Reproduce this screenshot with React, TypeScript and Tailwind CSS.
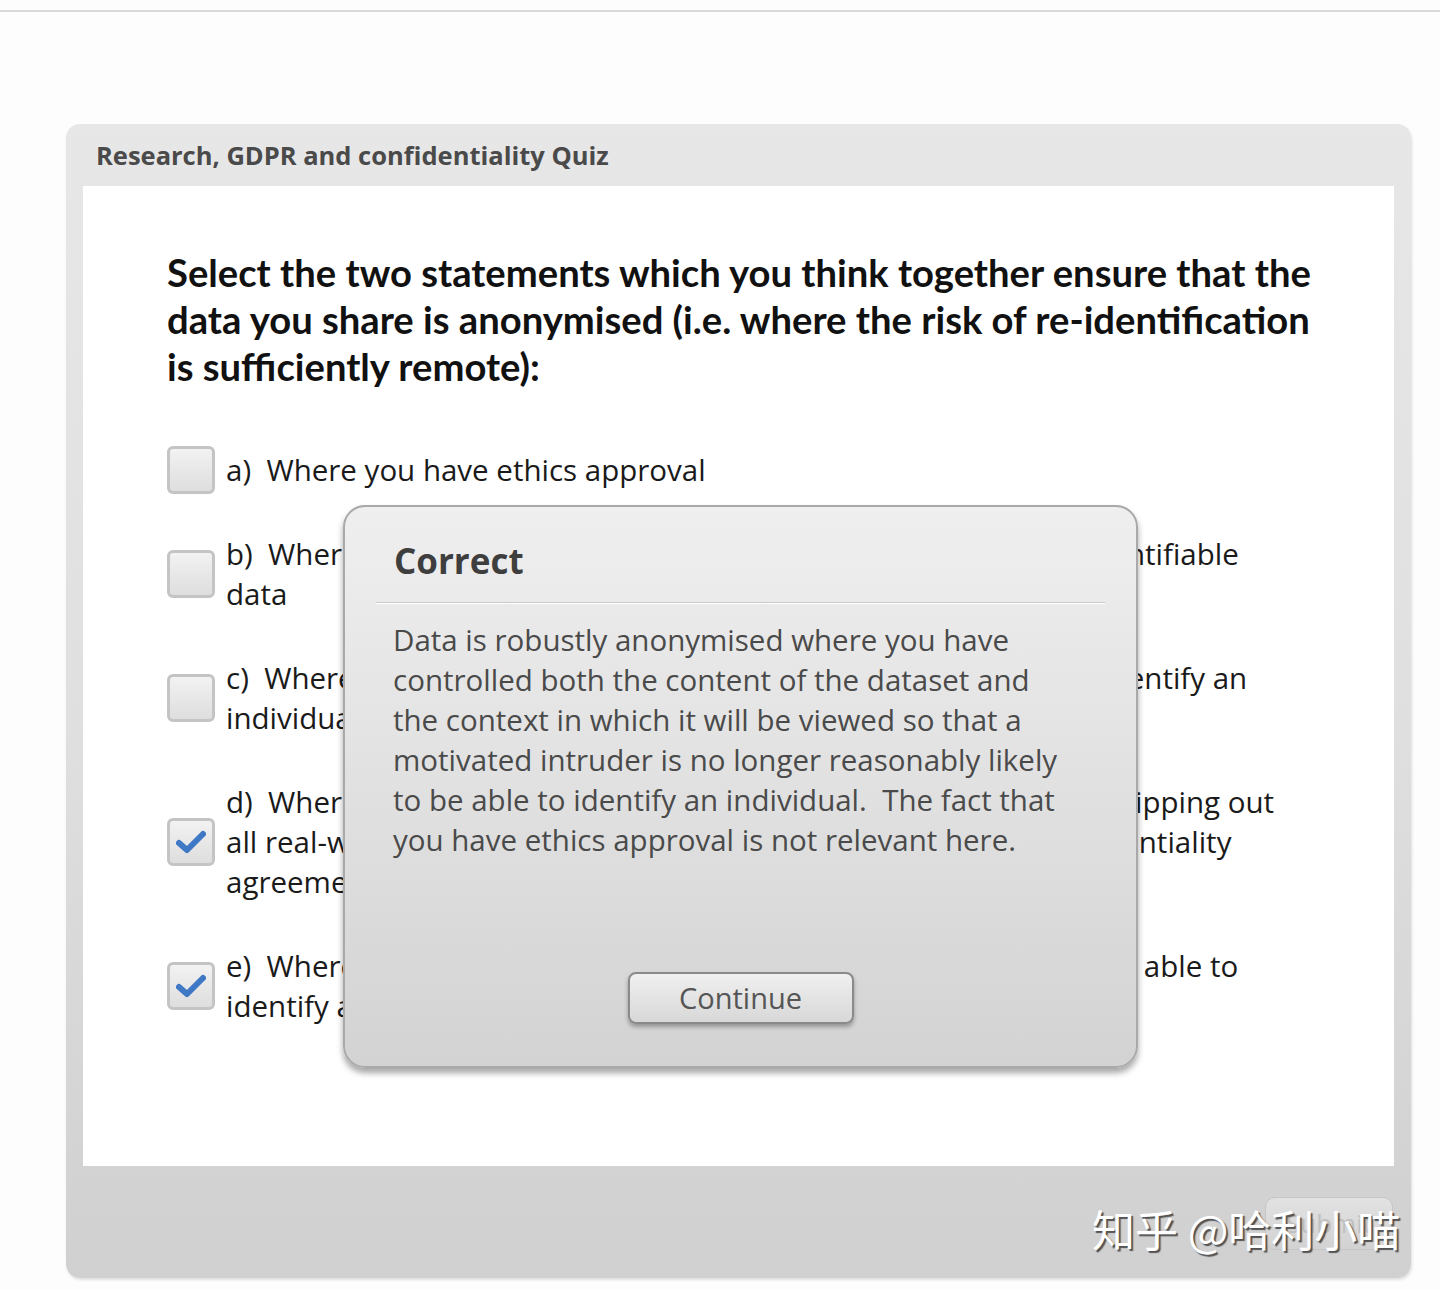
import React from "react";

const NB = "\u00a0";

function Check() {
  return (
    <svg width="30" height="24" viewBox="0 0 30 24">
      <path d="M3 13 L11 20 L27 4" fill="none" stroke="#3f78c4" strokeWidth="6" strokeLinecap="round" strokeLinejoin="round" />
    </svg>
  );
}

function Box({ checked }: { checked?: boolean }) {
  return (
    <div className="w-[48px] h-[48px] shrink-0 rounded-[6px] border-[3px] border-[#c4c4c4] bg-gradient-to-b from-[#f2f2f2] to-[#dedede] flex items-center justify-center">
      {checked ? <Check /> : null}
    </div>
  );
}

function Row({ lines, checked, cls }: { lines: string[]; checked?: boolean; cls: string }) {
  return (
    <div className={"flex items-center gap-[11px] " + cls}>
      <Box checked={checked} />
      <div className="text-[29.5px] leading-[40px] text-[#1a1a1a] whitespace-nowrap">
        {lines.map((l, i) => (
          <div key={i}>{l}</div>
        ))}
      </div>
    </div>
  );
}

export default function App() {
  return (
    <div className="relative w-[1440px] h-[1290px] bg-[#fdfdfd] overflow-hidden" style={{ fontFamily: '"Open Sans", "Noto Sans", sans-serif' }}>
      <div className="h-[10px]" />
      <div className="h-[2px] bg-[#d9d9d9]" />
      <div className="pt-[112px] pl-[66px]">
        <div className="w-[1345px] h-[1154px] rounded-[14px] bg-gradient-to-b from-[#e7e7e7] via-[#e0e0e0] to-[#d0d0d0] shadow-[1px_2px_3px_rgba(0,0,0,0.12)] flex flex-col px-[17px]">
          <div className="h-[62px] flex items-center pl-[13px]">
            <span className="text-[25.5px] font-bold text-[#4a4a4a]">Research, GDPR and confidentiality Quiz</span>
          </div>
          <div className="relative h-[980px] bg-white pt-[63px] pl-[84px]">
            <div className="text-[38.2px] leading-[47px] font-bold text-[#111111] w-[1165px]" style={{ fontFamily: 'Lato, "Open Sans", sans-serif' }}>
              Select the two statements which you think together ensure that the data you share is anonymised (i.e. where the risk of re-identification is sufficiently remote):
            </div>
            <div className="flex flex-col">
              <Row cls="mt-[56px]" lines={["a)" + NB + NB + "Where you have ethics approval"]} />
              <Row cls="mt-[40px]" lines={["b)" + NB + NB + "Where you have taken away names, addresses and directly identifiable", "data"]} />
              <Row cls="mt-[44px]" lines={["c)" + NB + NB + "Where you have removed information which may be used to identify an", "individual"]} />
              <Row cls="mt-[44px]" checked lines={["d)" + NB + NB + "Where you have controlled the environment of your data by stripping out", "all real-world links to the data and ensured users sign data confidentiality", "agreements"]} />
              <Row cls="mt-[44px]" checked lines={["e)" + NB + NB + "Where you know a motivated intruder would not reasonably be able to", "identify an individual"]} />
            </div>

            <div className="absolute left-[260px] top-[319px] w-[795px] h-[563px] rounded-[22px] border-[2px] border-[#a9a9a9] bg-gradient-to-b from-[#efefef] to-[#d3d3d3] shadow-[0_5px_6px_rgba(0,0,0,0.35)] flex flex-col">
              <div className="pt-[30px] pl-[49px] h-[95px]">
                <span className="text-[35px] leading-[48px] font-bold text-[#3e3e3e]">Correct</span>
              </div>
              <div className="mx-[31px] h-[2px] bg-[#c9c9c9] border-b border-white" />
              <div className="pt-[16px] pl-[48px] text-[29.5px] leading-[40px] text-[#4a4a4a] whitespace-nowrap">
                <div>Data is robustly anonymised where you have</div>
                <div>controlled both the content of the dataset and</div>
                <div>the context in which it will be viewed so that a</div>
                <div>motivated intruder is no longer reasonably likely</div>
                <div>{"to be able to identify an individual." + NB + " The fact that"}</div>
                <div>you have ethics approval is not relevant here.</div>
              </div>
              <div className="flex-1" />
              <div className="flex justify-center pb-[42px]">
                <div className="w-[226px] h-[52px] rounded-[8px] border-[2px] border-[#8a8a8a] bg-gradient-to-b from-[#f0f0f0] to-[#d8d8d8] shadow-[0_3px_4px_rgba(0,0,0,0.3)] flex items-center justify-center text-[29px] text-[#555555]">
                  Continue
                </div>
              </div>
            </div>
          </div>
          <div className="flex-1 flex justify-end pt-[31px] pr-[1px]">
            <div className="w-[128px] h-[53px] rounded-[10px] border border-[#c6c6c6] bg-gradient-to-b from-[#e2e2e2] to-[#d2d2d2] flex items-center justify-center text-[26px] text-[#c0c0c0]">
              Submit
            </div>
          </div>
        </div>
      </div>
      <div
        className="absolute left-[1092px] top-[1198px] text-[43px] leading-[60px] text-white whitespace-nowrap"
        style={{ fontFamily: '"Noto Sans CJK SC", sans-serif', textShadow: "2px 2px 1px rgba(60,60,60,0.85)" }}
      >
        知乎 @哈利小喵
      </div>
    </div>
  );
}
